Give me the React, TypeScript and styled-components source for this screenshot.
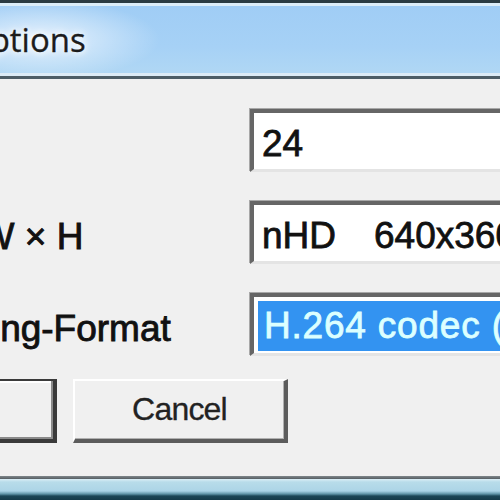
import React from 'react';
import styled, { createGlobalStyle } from 'styled-components';

const GlobalStyles = createGlobalStyle`
  html, body {
    margin: 0;
    padding: 0;
    width: 500px;
    height: 500px;
    overflow: hidden;
    background: #f0f0f0;
  }
`;

const App = () => {
  return (
    <Window aria-label="Options dialog">
      <GlobalStyles />
      <TopEdge />
      <TitleBar>
        <Title>Options</Title>
      </TitleBar>

      <Body>
        <Form>
          <Label>FPS</Label>
          <Field>24</Field>

          <Label>Size: W × H</Label>
          <Field>
            nHD<Gap />640x360
          </Field>

          <Label>Encoding-Format</Label>
          <Field>
            <Selected>H.264 codec (mp4)</Selected>
          </Field>
        </Form>

        <Buttons>
          <Button $isDefault>OK</Button>
          <Button>Cancel</Button>
        </Buttons>
      </Body>

      <BottomEdge />
    </Window>
  );
};

export default App;

const Window = styled.div`
  width: 500px;
  height: 500px;
  display: flex;
  flex-direction: column;
  overflow: hidden;
  font-family: "Liberation Sans", Arial, sans-serif;
  color: #111;
`;

const TopEdge = styled.div`
  height: 3px;
  background: #2b3b42;
  border-bottom: 3px solid #dcedf8;
`;

const TitleBar = styled.div`
  height: 67px;
  display: flex;
  align-items: center;
  background:
    radial-gradient(ellipse 120px 40px at 40px 50%, rgba(255, 255, 255, 0.75), rgba(255, 255, 255, 0) 100%),
    linear-gradient(180deg, #a0cdf5 0%, #a6d1f6 60%, #b0d7f4 100%);
  border-bottom: 3px solid #dcebf6;
  box-shadow: 0 3px 0 #4d5d66;
  margin-bottom: 3px;
`;

const Title = styled.span`
  font-family: "Open Sans", "Liberation Sans", sans-serif;
  font-size: 33px;
  color: #1c1c1c;
  margin-left: -36px;
  -webkit-text-stroke: 0.3px #1c1c1c;
  text-shadow: 0 0 10px #ffffff, 0 0 6px #ffffff;
`;

const Body = styled.div`
  flex: 1;
  display: flex;
  flex-direction: column;
  background: #f0f0f0;
  padding-top: 30px;
`;

const Form = styled.div`
  display: grid;
  grid-template-columns: 363px 262px;
  grid-auto-rows: 63px;
  row-gap: 29px;
  margin-left: -113px;
  align-items: center;
`;

const Label = styled.div`
  font-size: 37px;
  white-space: nowrap;
  padding-top: 9px;
  -webkit-text-stroke: 0.9px #111;
`;

const Field = styled.div`
  height: 63px;
  box-sizing: border-box;
  display: flex;
  align-items: center;
  white-space: nowrap;
  overflow: hidden;
  background: #fff;
  border-top: 4px solid #666;
  border-left: 4px solid #666;
  border-bottom: 3px solid #e4e4e4;
  border-right: 3px solid #e4e4e4;
  box-shadow: -1px -1px 0 #a8a8a8;
  padding: 5px 4px 0 8px;
  font-size: 37px;
  -webkit-text-stroke: 0.8px #111;
`;

const Gap = styled.span`
  flex: 0 0 auto;
  width: 38px;
`;

const Selected = styled.span`
  flex: 1 0 auto;
  align-self: stretch;
  display: flex;
  align-items: center;
  margin: -1px -4px 2px -4px;
  padding-left: 6px;
  background: #3393f1;
  color: #dcffff;
  -webkit-text-stroke: 0.8px #dcffff;
  letter-spacing: 0.8px;
`;

const Buttons = styled.div`
  display: flex;
  gap: 16px;
  margin-top: 23px;
  margin-left: -158px;
`;

const Button = styled.div<{ $isDefault?: boolean }>`
  width: 215px;
  height: 64px;
  box-sizing: border-box;
  display: flex;
  align-items: center;
  justify-content: center;
  padding-bottom: 2px;
  background: #f0f0f0;
  font-size: 32px;
  color: #222;
  letter-spacing: -0.8px;
  -webkit-text-stroke: 0.3px #222;
  border-top: 2px solid ${({ $isDefault }) => ($isDefault ? '#3a3a3a' : '#ffffff')};
  border-left: 2px solid ${({ $isDefault }) => ($isDefault ? '#3a3a3a' : '#ffffff')};
  border-right: 4px solid ${({ $isDefault }) => ($isDefault ? '#3a3a3a' : '#5c5c5c')};
  border-bottom: 4px solid ${({ $isDefault }) => ($isDefault ? '#3a3a3a' : '#5c5c5c')};
  box-shadow: ${({ $isDefault }) =>
    $isDefault ? 'inset -2px -2px 0 #8a8a8a, inset 2px 2px 0 #fff' : 'inset -1px -1px 0 #b0b0b0'};
`;

const BottomEdge = styled.div`
  height: 24px;
  background: linear-gradient(
    180deg,
    #80888c 0px,
    #555d62 3px,
    #dbeef6 3px,
    #b8dcea 6px,
    #acd4e6 15px,
    #5f93a6 18px,
    #1c4656 20px,
    #163a48 24px
  );
`;
